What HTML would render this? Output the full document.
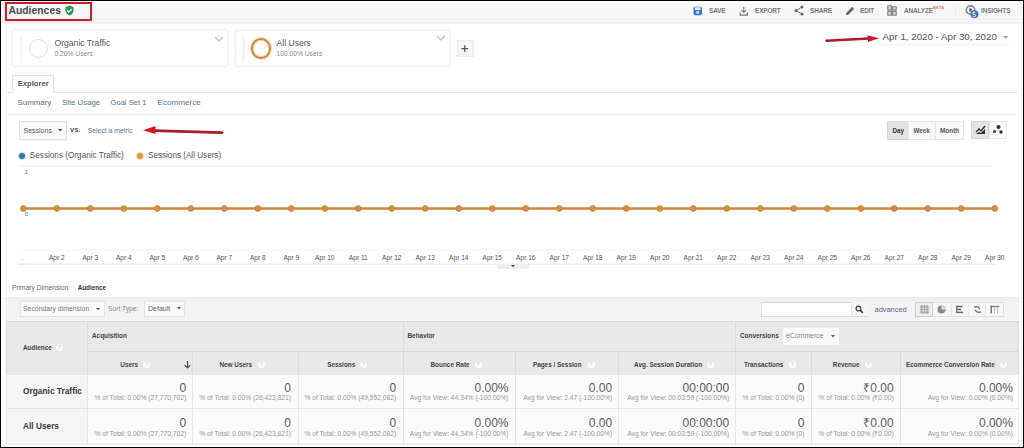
<!DOCTYPE html>
<html><head><meta charset="utf-8">
<style>
*{box-sizing:border-box;margin:0;padding:0}
html,body{width:1024px;height:448px;overflow:hidden;background:#000}
body{font-family:"Liberation Sans",sans-serif;color:#444;position:relative}
#page{position:absolute;left:0;top:0;width:1024px;height:448px;background:#fff;overflow:hidden}
.a{position:absolute;white-space:nowrap;line-height:1}
/* header */
#hdr{position:absolute;left:0;top:0;width:1024px;height:24px;background:linear-gradient(to bottom,#fbfbfc 0,#fbfbfc 3px,#f4f5f6 3px,#f4f5f6 4px,#f6f7f9 4px,#f6f7f9 16.5px,#f9f9fa 16.5px,#f9f9fa 18.5px,#f3f3f4 18.5px,#f3f3f4 20px,#fafafa 20px,#fafafa 21.5px,#f4f4f4 21.5px,#f4f4f4 24px,#fff 24px)}
.tb{font-weight:bold;font-size:6.45px;color:#777;letter-spacing:-0.14px}
.card{position:absolute;background:#fff;border:1px solid #eff0f1;border-radius:2px;box-shadow:0 0 2px rgba(0,0,0,0.07)}
.seg-t{font-size:8.6px;color:#555}
.seg-s{font-size:6.7px;color:#888}
.link{color:#5c7590}
.btn{position:absolute;border:1px solid #dcdcdc;background:#f6f6f6}
.th{font-weight:bold;font-size:6.4px;color:#444}
.help{display:inline-block;width:7px;height:7px;border-radius:50%;background:#fafafa;vertical-align:middle}
.num{font-size:12px;color:#5a5a5a}
.sub{font-size:6.7px;color:#999}
</style></head><body>
<div id="page">
  <!-- header bar -->
  <div id="hdr"></div>
  <div class="a" style="left:5.2px;top:1.9px;width:86.4px;height:19.4px;border:2.6px solid #c42030;box-shadow:0 0 1px rgba(220,40,50,0.5)"></div>
  <div class="a" style="left:8.4px;top:6px;font-size:10.4px;font-weight:bold;color:#4a4a4a">Audiences</div>
  <svg class="a" style="left:64px;top:5px" width="11" height="11" viewBox="0 0 24 24"><path d="M12 1L3 5v6c0 5.5 3.8 10.7 9 12 5.2-1.3 9-6.5 9-12V5z" fill="#2e9b4e"/><path d="M7 12l3.5 3.5L17 9" stroke="#fff" stroke-width="3" fill="none"/></svg>

  <!-- toolbar items -->
  <svg class="a" style="left:693px;top:6px" width="9.5" height="10" viewBox="0 0 10 10"><rect x="0.5" y="0.5" width="9" height="9" rx="1.8" fill="#3e74c6"/><rect x="2" y="1" width="6" height="3" fill="#dce8f8"/><circle cx="5" cy="6.5" r="1.5" fill="#dce8f8"/></svg>
  <div class="a tb" style="left:709px;top:8px">SAVE</div>
  <svg class="a" style="left:739px;top:5.5px" width="9.5" height="10" viewBox="0 0 10 11"><path d="M5 1v6M2.5 4.5L5 7l2.5-2.5M1 7v3h8V7" stroke="#777" stroke-width="1.2" fill="none"/></svg>
  <div class="a tb" style="left:755px;top:8px">EXPORT</div>
  <svg class="a" style="left:794px;top:5px" width="10" height="11" viewBox="0 0 10 11"><circle cx="8" cy="2" r="1.5" fill="#666"/><circle cx="2" cy="5.5" r="1.5" fill="#666"/><circle cx="8" cy="9" r="1.5" fill="#666"/><path d="M8 2L2 5.5 8 9" stroke="#666" stroke-width="0.9" fill="none"/></svg>
  <div class="a tb" style="left:810px;top:8px">SHARE</div>
  <svg class="a" style="left:844.5px;top:5.5px" width="10" height="10" viewBox="0 0 10 10"><path d="M0.8 9.2l0.8-2.8 5.6-5.6 2 2-5.6 5.6z" fill="#666"/></svg>
  <div class="a tb" style="left:860px;top:8px">EDIT</div>
  <svg class="a" style="left:886.5px;top:4.5px" width="10" height="11" viewBox="0 0 10 11"><path d="M0.8 0.8h3.6v4.2H0.8zM5.6 1.8h3.6v3.2H5.6zM0.8 6.2h3.6v4H0.8zM5.6 6.2h3.6v4H5.6z" fill="#d8d8d8" stroke="#808080" stroke-width="1.1"/></svg>
  <div class="a tb" style="left:904px;top:8px">ANALYZE</div>
  <div class="a" style="left:933px;top:5.5px;font-size:4.3px;font-weight:bold;color:#ea7a6c">BETA</div>
  <div class="a" style="left:955px;top:6px;width:1px;height:11px;background:#ececec"></div>
  <svg class="a" style="left:964px;top:4px" width="15" height="15" viewBox="0 0 15 15"><circle cx="6.5" cy="6" r="4.2" fill="none" stroke="#8a8a8a" stroke-width="1.8"/><circle cx="6.5" cy="6" r="1.7" fill="#666"/><circle cx="10.5" cy="10.3" r="4" fill="#3f77c8"/><path d="M9 8.3h2.4M9.2 8.3l-0.3 2h1.2a1.3 1.3 0 1 1 -1.2 1.6" stroke="#fff" stroke-width="0.9" fill="none"/></svg>
  <div class="a tb" style="left:981px;top:8px">INSIGHTS</div>

  <!-- segments -->
  <div class="card" style="left:12px;top:29px;width:216px;height:38px"></div>
  <div class="a" style="left:19.5px;top:35px;width:2.5px;height:28px;background:#f7f5f1"></div>
  <div class="a" style="left:28.9px;top:38.8px;width:19px;height:19px;border-radius:50%;border:1.7px solid #d3e4e8"></div>
  <div class="a seg-t" style="left:54.5px;top:39px">Organic Traffic</div>
  <div class="a seg-s" style="left:54.5px;top:50.7px">0.20% Users</div>
  <svg class="a" style="left:214px;top:35.5px" width="10" height="6" viewBox="0 0 10 6"><path d="M1 1l4 4 4-4" stroke="#c4c4c4" stroke-width="1.4" fill="none"/></svg>

  <div class="card" style="left:235px;top:29.8px;width:215px;height:37.5px"></div>
  <div class="a" style="left:242px;top:35px;width:2.5px;height:28px;background:#f6f6f0"></div>
  <div class="a" style="left:250.8px;top:38.4px;width:20.2px;height:20.2px;border-radius:50%;border:2.7px solid #c98a40;box-shadow:0 0 0 1px #f7e2c8, inset 0 0 0 1px #f3d6b0"></div>
  <div class="a seg-t" style="left:276.5px;top:39px">All Users</div>
  <div class="a seg-s" style="left:276.5px;top:50.7px">100.00% Users</div>
  <svg class="a" style="left:436px;top:35px" width="10" height="6" viewBox="0 0 10 6"><path d="M1 1l4 4 4-4" stroke="#c4c4c4" stroke-width="1.4" fill="none"/></svg>
  <div class="a" style="left:456.8px;top:40px;width:17px;height:17px;background:#f5f5f5;border:1px solid #ececec"></div>
  <svg class="a" style="left:460px;top:44px" width="10" height="10" viewBox="0 0 10 10"><path d="M4.8 1.3v6.6M1.5 4.6h6.6" stroke="#555" stroke-width="1.3"/></svg>

  <!-- date -->
  <div class="a" style="left:882.5px;top:31.9px;font-size:9.75px;color:#555">Apr 1, 2020 - Apr 30, 2020</div>
  <svg class="a" style="left:1002.5px;top:36px" width="5.5" height="3" viewBox="0 0 5.5 3"><path d="M0 0h5.5L2.75 3z" fill="#aaa"/></svg>
  <div class="a" style="left:880px;top:44.2px;width:130px;height:1px;background:#f1f1f1"></div>
  <svg class="a" style="left:820px;top:30px" width="65" height="16" viewBox="0 0 65 16"><path d="M6.5 10.7L49 8.5" stroke="#a81c24" stroke-width="2.4" stroke-linecap="round"/><path d="M47.5 5.3L59 8.2 48 12z" fill="#d41820"/></svg>

  <!-- explorer tab -->
  <div class="a" style="left:6px;top:24px;width:1px;height:272px;background:#f3f3f3"></div>
  <div class="a" style="left:1021px;top:24px;width:1px;height:422px;background:#f2f2f2"></div>
  <div class="a" style="left:7px;top:91.5px;width:6px;height:1px;background:#e6e6e6"></div>
  <div class="a" style="left:12.3px;top:74.5px;width:41.4px;height:17.5px;border:1px solid #e3e3e3;border-bottom:none;background:#fff"></div>
  <div class="a" style="left:53px;top:91.7px;width:965px;height:1px;background:#e6e6e6"></div>
  <div class="a" style="left:17.8px;top:79.6px;font-size:7.6px;font-weight:bold;color:#555">Explorer</div>
  <div class="a" style="left:17.5px;top:99.3px;font-size:7.9px;color:#666">Summary</div>
  <div class="a link" style="left:62px;top:99.3px;font-size:7.8px">Site Usage</div>
  <div class="a link" style="left:110.5px;top:99.3px;font-size:7.6px">Goal Set 1</div>
  <div class="a link" style="left:157.5px;top:99.3px;font-size:8.1px">Ecommerce</div>
  <div class="a" style="left:7.5px;top:113.6px;width:1010.5px;height:1px;background:#ebebeb"></div>

  <!-- sessions selector -->
  <div class="btn" style="left:18.5px;top:120.5px;width:48px;height:19px;background:#fafafa;border-color:#e2e2e2;box-shadow:0 1px 1px rgba(0,0,0,0.04)"></div>
  <div class="a" style="left:23.5px;top:126.5px;font-size:7px;color:#555">Sessions</div>
  <svg class="a" style="left:57.5px;top:129.3px" width="4.5" height="2.6" viewBox="0 0 4.5 2.6"><path d="M0 0h4.5L2.25 2.6z" fill="#555"/></svg>
  <div class="a" style="left:70px;top:126px;font-size:7.5px;color:#555;font-weight:bold">vs.</div>
  <div class="a link" style="left:87.8px;top:127.9px;font-size:6.8px">Select a metric</div>
  <svg class="a" style="left:138px;top:122px" width="90" height="16" viewBox="0 0 90 16"><path d="M84 10.7L15 8.6" stroke="#a81c24" stroke-width="2.8" stroke-linecap="round"/><path d="M5 8.2l12.5-4.2v8z" fill="#d41820"/></svg>

  <!-- day/week/month -->
  <div class="btn" style="left:887px;top:120.5px;width:21.5px;height:19px;background:#e3e3e3;border-color:#d6d6d6"></div>
  <div class="btn" style="left:908px;top:120.5px;width:27.5px;height:19px;background:#f9f9f9;border-color:#e6e6e6"></div>
  <div class="btn" style="left:935px;top:120.5px;width:28.5px;height:19px;background:#f9f9f9;border-color:#e6e6e6"></div>
  <div class="a" style="left:892.5px;top:127.6px;font-size:6.3px;font-weight:bold;color:#333">Day</div>
  <div class="a" style="left:913.5px;top:127.6px;font-size:6.3px;font-weight:bold;color:#555">Week</div>
  <div class="a" style="left:940px;top:127.6px;font-size:6.4px;font-weight:bold;color:#555">Month</div>
  <div class="btn" style="left:971px;top:120.5px;width:18px;height:18.5px;background:#e3e3e3;border-color:#d6d6d6"></div>
  <div class="btn" style="left:988.5px;top:120.5px;width:18.5px;height:18.5px;background:#f8f8f8;border-color:#e6e6e6"></div>
  <svg class="a" style="left:975px;top:124px" width="11" height="11" viewBox="0 0 11 11"><path d="M1 8l3-3 2 2 4-5" stroke="#333" stroke-width="1.3" fill="none"/><path d="M1 10l3-2 2 1 4-4v5H1z" fill="#333"/></svg>
  <svg class="a" style="left:992px;top:124px" width="12" height="11" viewBox="0 0 12 11"><circle cx="6.5" cy="3" r="2" fill="#333"/><circle cx="2.5" cy="7.5" r="1.5" fill="#333"/><circle cx="9" cy="8" r="1.7" fill="#333"/></svg>

  <!-- legend -->
  <div class="a" style="left:18.5px;top:152.5px;width:6px;height:6px;border-radius:50%;background:#2a7fa6;box-shadow:0 0 0 1px #cde3ee"></div>
  <div class="a" style="left:29.8px;top:151.7px;font-size:8.2px;color:#555">Sessions (Organic Traffic)</div>
  <div class="a" style="left:136.5px;top:152.7px;width:6px;height:6px;border-radius:50%;background:#e0953f;box-shadow:0 0 0 1px #f6dfc3"></div>
  <div class="a" style="left:148px;top:151.7px;font-size:8.15px;color:#555">Sessions (All Users)</div>

  <!-- chart -->
  <svg class="a" style="left:0;top:160px" width="1021" height="115" viewBox="0 160 1021 115">
    <line x1="18" y1="166" x2="993" y2="166" stroke="#eeeeee" stroke-width="1"/><line x1="18" y1="250" x2="993" y2="250" stroke="#f6f6f6" stroke-width="1"/>
    <line x1="18" y1="264.2" x2="996" y2="264.2" stroke="#e6e6e6" stroke-width="1"/>
    <g id="dots"></g>
  </svg>
  <div class="a" style="left:24.8px;top:168.8px;font-size:6px;color:#777">1</div>
  <div class="a" style="left:24.8px;top:211px;font-size:6px;color:#777">0</div>
  <div id="xl"></div>
  <div class="a" style="left:497px;top:264px;width:32px;height:5px;background:#eeeeee;border-radius:0 0 2px 2px"></div>
  <svg class="a" style="left:511px;top:265.2px" width="4" height="2.5" viewBox="0 0 4 2.5"><path d="M0 0h4L2 2.5z" fill="#555"/></svg>

  <!-- primary dimension -->
  <div class="a" style="left:12px;top:285px;font-size:6.65px;color:#666">Primary Dimension:</div>
  <div class="a" style="left:77.7px;top:285px;font-size:6.3px;font-weight:bold;color:#333">Audience</div>

  <!-- table toolbar -->
  <div class="a" style="left:5px;top:296.5px;width:1014px;height:24.5px;background:linear-gradient(#f0f0f0 0,#f0f0f0 4px,#f4f4f4 4px);border-top:1px solid #ebebeb"></div>
  <div class="btn" style="left:19.5px;top:301px;width:85px;height:16px;background:#fbfbfb;border-color:#e4e4e4"></div>
  <div class="a" style="left:23px;top:305.5px;font-size:6.9px;color:#777">Secondary dimension</div>
  <svg class="a" style="left:95.8px;top:307.5px" width="4" height="2.5" viewBox="0 0 4 2.5"><path d="M0 0h4L2 2.5z" fill="#555"/></svg>
  <div class="a" style="left:108px;top:305.5px;font-size:6.7px;color:#888">Sort Type:</div>
  <div class="btn" style="left:143.5px;top:301px;width:41.5px;height:16px;background:#fbfbfb;border-color:#e4e4e4"></div>
  <div class="a" style="left:148px;top:304.8px;font-size:7px;color:#666">Default</div>
  <svg class="a" style="left:176.5px;top:307.3px" width="4" height="2.5" viewBox="0 0 4 2.5"><path d="M0 0h4L2 2.5z" fill="#555"/></svg>

  <div class="a" style="left:761px;top:301.5px;width:108px;height:15px;background:#fff;border:1px solid #dcdcdc"></div>
  <div class="a" style="left:851px;top:302px;width:17.5px;height:14px;background:#f6f6f6;border-left:1px solid #e5e5e5"></div>
  <svg class="a" style="left:855px;top:305px" width="9" height="9" viewBox="0 0 9 9"><circle cx="3.5" cy="3.5" r="2.4" stroke="#444" stroke-width="1.3" fill="none"/><path d="M5.2 5.2L7.8 7.8" stroke="#444" stroke-width="1.7"/></svg>
  <div class="a link" style="left:874.6px;top:305.6px;font-size:7.4px;color:#52699a">advanced</div>
  

  <!-- table -->
  
<div class="a" style="left:915px;top:301.7px;width:88.5px;height:15px;background:#f7f7f7;border:1px solid #e0e0e0"></div>
  <div class="a" style="left:915px;top:301.7px;width:18px;height:15px;background:#eeeeee;border:1px solid #cfcfcf"></div>
  <div class="a" style="left:950.5px;top:302.5px;width:1px;height:13.5px;background:#e4e4e4"></div>
  <div class="a" style="left:967.5px;top:302.5px;width:1px;height:13.5px;background:#e4e4e4"></div>
  <div class="a" style="left:985px;top:302.5px;width:1px;height:13.5px;background:#e4e4e4"></div>
  <svg class="a" style="left:919.5px;top:305px" width="9" height="9" viewBox="0 0 9 9"><rect x="0.5" y="0.5" width="8" height="8" fill="#a0a0a0"/><path d="M3.2 0.5v8M5.8 0.5v8M0.5 3.2h8M0.5 5.8h8" stroke="#eee" stroke-width="0.6"/></svg>
  <svg class="a" style="left:937px;top:305px" width="9" height="9" viewBox="0 0 9 9"><circle cx="4.5" cy="4.5" r="4" fill="#8a8a8a"/><path d="M4.5 4.5V0.8A3.7 3.7 0 0 1 8.2 4.5z" fill="#ddd"/></svg>
  <svg class="a" style="left:955px;top:305px" width="9" height="9" viewBox="0 0 9 9"><rect x="1" y="0.8" width="6.5" height="1.5" fill="#666"/><rect x="1" y="3.7" width="5" height="1.5" fill="#666"/><rect x="1" y="6.6" width="7" height="1.5" fill="#666"/><rect x="1" y="0.8" width="1.2" height="7.3" fill="#777"/></svg>
  <svg class="a" style="left:972.5px;top:305px" width="9" height="9" viewBox="0 0 9 9"><path d="M1 1.8h3.8l2.2 2.2M8 7.2H4.2L2 5" stroke="#666" stroke-width="1.2" fill="none"/></svg>
  <svg class="a" style="left:990px;top:305px" width="10" height="9" viewBox="0 0 10 9"><rect x="0.5" y="0.8" width="9" height="1.4" fill="#888"/><rect x="0.5" y="0.8" width="1.5" height="7.5" fill="#777"/><path d="M4.5 2.5v6M7.5 2.5v6" stroke="#aaa" stroke-width="0.8"/></svg>
<!--TBL-->
<style>
.hd{position:absolute;background:#e8e8e8;border-left:1px solid #d9d9d9;border-top:1px solid #d9d9d9}
.cl{position:absolute;background:#fbfbfb;border-left:1px solid #e6e6e6;border-top:1px solid #e6e6e6}
.rt{position:absolute;white-space:nowrap;line-height:1;text-align:right}
.hq{position:absolute;width:7px;height:7px;border-radius:50%;background:#fbfbfb;font-size:5px;line-height:7px;text-align:center;color:#ccc;font-weight:bold}
</style>
<div class="hd" style="left:5.5px;top:320.5px;width:81.0px;height:53.10000000000002px"></div>
<div class="hd" style="left:86.5px;top:320.5px;width:316.0px;height:30.30000000000001px"></div>
<div class="hd" style="left:402.5px;top:320.5px;width:332.0px;height:30.30000000000001px"></div>
<div class="hd" style="left:734.5px;top:320.5px;width:284.5px;height:30.30000000000001px;border-right:1px solid #d9d9d9"></div>
<div class="hd" style="left:86.5px;top:350.8px;width:105.0px;height:22.80000000000001px"></div>
<div class="hd" style="left:191.5px;top:350.8px;width:106.5px;height:22.80000000000001px"></div>
<div class="hd" style="left:298px;top:350.8px;width:104.5px;height:22.80000000000001px"></div>
<div class="hd" style="left:402.5px;top:350.8px;width:112.5px;height:22.80000000000001px"></div>
<div class="hd" style="left:515px;top:350.8px;width:103px;height:22.80000000000001px"></div>
<div class="hd" style="left:618px;top:350.8px;width:116.5px;height:22.80000000000001px"></div>
<div class="hd" style="left:734.5px;top:350.8px;width:76.0px;height:22.80000000000001px"></div>
<div class="hd" style="left:810.5px;top:350.8px;width:89.5px;height:22.80000000000001px"></div>
<div class="hd" style="left:900px;top:350.8px;width:119px;height:22.80000000000001px;border-right:1px solid #d9d9d9"></div>
<div class="a" style="left:5.5px;top:444.3px;width:1014.5px;height:1px;background:#e4e4e4"></div>
<div class="cl" style="left:5.5px;top:373.6px;width:81.0px;height:34.19999999999999px;background:#f6f6f6"></div>
<div class="cl" style="left:86.5px;top:373.6px;width:105.0px;height:34.19999999999999px"></div>
<div class="cl" style="left:191.5px;top:373.6px;width:106.5px;height:34.19999999999999px"></div>
<div class="cl" style="left:298px;top:373.6px;width:104.5px;height:34.19999999999999px"></div>
<div class="cl" style="left:402.5px;top:373.6px;width:112.5px;height:34.19999999999999px"></div>
<div class="cl" style="left:515px;top:373.6px;width:103px;height:34.19999999999999px"></div>
<div class="cl" style="left:618px;top:373.6px;width:116.5px;height:34.19999999999999px"></div>
<div class="cl" style="left:734.5px;top:373.6px;width:76.0px;height:34.19999999999999px"></div>
<div class="cl" style="left:810.5px;top:373.6px;width:89.5px;height:34.19999999999999px"></div>
<div class="cl" style="left:900px;top:373.6px;width:119px;height:34.19999999999999px;border-right:1px solid #e6e6e6"></div>
<div class="cl" style="left:5.5px;top:407.8px;width:81.0px;height:36.5px;background:#f6f6f6"></div>
<div class="cl" style="left:86.5px;top:407.8px;width:105.0px;height:36.5px"></div>
<div class="cl" style="left:191.5px;top:407.8px;width:106.5px;height:36.5px"></div>
<div class="cl" style="left:298px;top:407.8px;width:104.5px;height:36.5px"></div>
<div class="cl" style="left:402.5px;top:407.8px;width:112.5px;height:36.5px"></div>
<div class="cl" style="left:515px;top:407.8px;width:103px;height:36.5px"></div>
<div class="cl" style="left:618px;top:407.8px;width:116.5px;height:36.5px"></div>
<div class="cl" style="left:734.5px;top:407.8px;width:76.0px;height:36.5px"></div>
<div class="cl" style="left:810.5px;top:407.8px;width:89.5px;height:36.5px"></div>
<div class="cl" style="left:900px;top:407.8px;width:119px;height:36.5px;border-right:1px solid #e6e6e6"></div>
<div class="a th" style="left:23px;top:344.5px">Audience</div>
<div class="hq" style="left:56px;top:344px">?</div>
<div class="a th" style="left:92px;top:332.5px">Acquisition</div>
<div class="a th" style="left:407.5px;top:332.5px">Behavior</div>
<div class="a th" style="left:740px;top:333px">Conversions</div>
<div class="a" style="left:783px;top:328px;width:55.5px;height:16.5px;background:#fafafa"></div>
<div class="a" style="left:786px;top:333px;font-size:6.9px;color:#888">eCommerce</div>
<svg class="a" style="left:830.5px;top:335.3px" width="4" height="2.5" viewBox="0 0 4 2.5"><path d="M0 0h4L2 2.5z" fill="#666"/></svg>
<div class="a th" style="left:120.3px;top:361.5px">Users</div>
<div class="hq" style="left:143.0px;top:361px">?</div>
<div class="a th" style="left:219.4px;top:361.5px">New Users</div>
<div class="hq" style="left:257.7px;top:361px">?</div>
<div class="a th" style="left:327.2px;top:361.5px">Sessions</div>
<div class="hq" style="left:360.4px;top:361px">?</div>
<div class="a th" style="left:430.5px;top:361.5px">Bounce Rate</div>
<div class="hq" style="left:474.6px;top:361px">?</div>
<div class="a th" style="left:532.9px;top:361.5px">Pages / Session</div>
<div class="hq" style="left:587.8px;top:361px">?</div>
<div class="a th" style="left:634.1px;top:361.5px">Avg. Session Duration</div>
<div class="hq" style="left:706.9px;top:361px">?</div>
<div class="a th" style="left:744px;top:361.5px">Transactions</div>
<div class="hq" style="left:788.9px;top:361px">?</div>
<div class="a th" style="left:832.8px;top:361.5px">Revenue</div>
<div class="hq" style="left:864.5px;top:361px">?</div>
<div class="a th" style="left:906px;top:361.5px">Ecommerce Conversion Rate</div>
<div class="hq" style="left:999.7px;top:361px">?</div>
<svg class="a" style="left:184px;top:360.5px" width="7" height="8" viewBox="0 0 7 8"><path d="M3.5 0v7M0.8 4.2L3.5 7 6.2 4.2" stroke="#444" stroke-width="1.1" fill="none"/></svg>
<div class="a" style="left:23px;top:386.5px;font-size:8.35px;font-weight:bold;color:#3a3a3a">Organic Traffic</div>
<div class="a" style="left:23px;top:421.5px;font-size:8.3px;font-weight:bold;color:#3a3a3a">All Users</div>
<div class="rt num" style="right:837.8px;top:381.5px">0</div>
<div class="rt sub" style="right:837.8px;top:395.3px">% of Total: 0.00% (27,770,702)</div>
<div class="rt num" style="right:733px;top:381.5px">0</div>
<div class="rt sub" style="right:733px;top:395.3px">% of Total: 0.00% (26,423,821)</div>
<div class="rt num" style="right:627.8px;top:381.5px">0</div>
<div class="rt sub" style="right:627.8px;top:395.3px">% of Total: 0.00% (49,552,082)</div>
<div class="rt num" style="right:515.5px;top:381.5px">0.00%</div>
<div class="rt sub" style="right:515.5px;top:395.3px">Avg for View: 44.34% (-100.00%)</div>
<div class="rt num" style="right:411.8px;top:381.5px">0.00</div>
<div class="rt sub" style="right:411.8px;top:395.3px">Avg for View: 2.47 (-100.00%)</div>
<div class="rt num" style="right:294.8px;top:381.5px">00:00:00</div>
<div class="rt sub" style="right:294.8px;top:395.3px">Avg for View: 00:03:59 (-100.00%)</div>
<div class="rt num" style="right:219.6px;top:381.5px">0</div>
<div class="rt sub" style="right:219.6px;top:395.3px">% of Total: 0.00% (0)</div>
<div class="rt num" style="right:130.4px;top:381.5px">₹0.00</div>
<div class="rt sub" style="right:130.4px;top:395.3px">% of Total: 0.00% (₹0.00)</div>
<div class="rt num" style="right:11.1px;top:381.5px">0.00%</div>
<div class="rt sub" style="right:11.1px;top:395.3px">Avg for View: 0.00% (0.00%)</div>
<div class="rt num" style="right:837.8px;top:416.9px">0</div>
<div class="rt sub" style="right:837.8px;top:430.7px">% of Total: 0.00% (27,770,702)</div>
<div class="rt num" style="right:733px;top:416.9px">0</div>
<div class="rt sub" style="right:733px;top:430.7px">% of Total: 0.00% (26,423,821)</div>
<div class="rt num" style="right:627.8px;top:416.9px">0</div>
<div class="rt sub" style="right:627.8px;top:430.7px">% of Total: 0.00% (49,552,082)</div>
<div class="rt num" style="right:515.5px;top:416.9px">0.00%</div>
<div class="rt sub" style="right:515.5px;top:430.7px">Avg for View: 44.34% (-100.00%)</div>
<div class="rt num" style="right:411.8px;top:416.9px">0.00</div>
<div class="rt sub" style="right:411.8px;top:430.7px">Avg for View: 2.47 (-100.00%)</div>
<div class="rt num" style="right:294.8px;top:416.9px">00:00:00</div>
<div class="rt sub" style="right:294.8px;top:430.7px">Avg for View: 00:03:59 (-100.00%)</div>
<div class="rt num" style="right:219.6px;top:416.9px">0</div>
<div class="rt sub" style="right:219.6px;top:430.7px">% of Total: 0.00% (0)</div>
<div class="rt num" style="right:130.4px;top:416.9px">₹0.00</div>
<div class="rt sub" style="right:130.4px;top:430.7px">% of Total: 0.00% (₹0.00)</div>
<div class="rt num" style="right:11.1px;top:416.9px">0.00%</div>
<div class="rt sub" style="right:11.1px;top:430.7px">Avg for View: 0.00% (0.00%)</div>
<!--/TBL-->
  <div class="a" style="left:0;top:0;width:1024px;height:1px;background:#000"></div>
  <div class="a" style="left:0;top:0;width:1px;height:448px;background:#000"></div>
  <div class="a" style="left:1023px;top:0;width:1px;height:448px;background:#000"></div>
  <div class="a" style="left:0;top:446.7px;width:1024px;height:1.3px;background:#000"></div>
</div>
<script>
// chart dots and labels
(function(){
  var g=document.getElementById('dots');
  var s='';
  var x0=23.3, dx=(994.8-23.3)/29, y=208.5;
  s+='<line x1="'+x0+'" y1="'+y+'" x2="994.8" y2="'+y+'" stroke="#cc873c" stroke-width="2.6"/>';
  for(var i=0;i<30;i++){var x=x0+dx*i; s+='<circle cx="'+x+'" cy="'+y+'" r="2.9" fill="#d6913f" stroke="#c27f38" stroke-width="0.8"/>';}
  g.innerHTML=s;
  var xl=document.getElementById('xl'), h='';
  h+='<div class="a" style="left:20px;top:255px;font-size:6px;color:#bbb">...</div>';
  for(var i=1;i<30;i++){var x=x0+dx*i; h+='<div class="a" style="left:'+(x-20)+'px;width:40px;text-align:center;top:254.9px;font-size:6.6px;color:#555">Apr '+(i+1)+'</div>';}
  xl.innerHTML=h;
})();
</script>
</body></html>
